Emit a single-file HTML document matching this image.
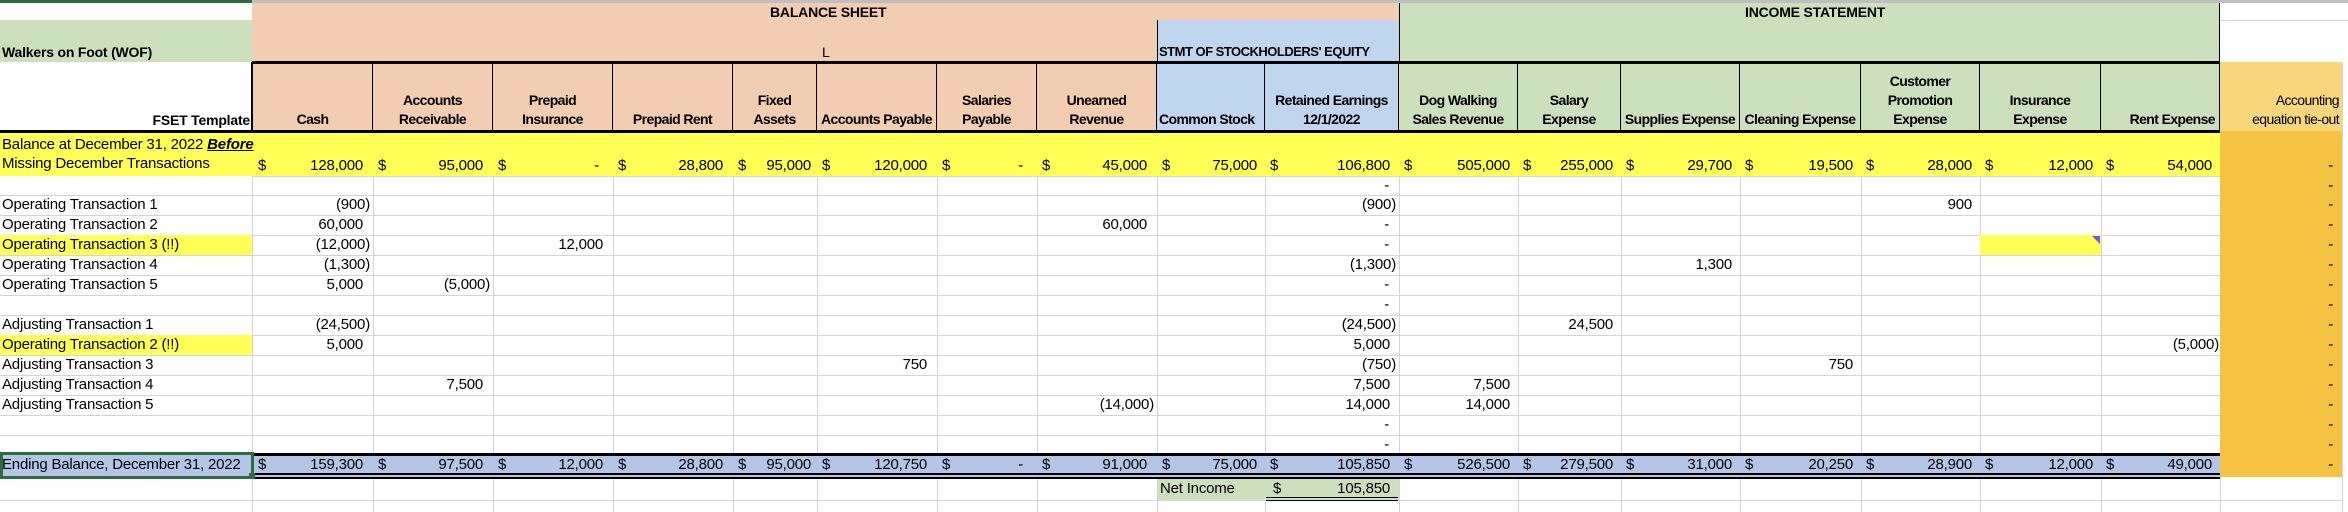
<!DOCTYPE html>
<html><head><meta charset="utf-8"><style>
*{margin:0;padding:0;box-sizing:border-box}
body{width:2348px;height:512px;position:relative;overflow:hidden;background:#fff;font-family:"Liberation Sans Narrow","Liberation Sans",sans-serif;font-size:15px;color:#000;letter-spacing:-0.2px}
div{position:absolute}
.h{height:1px;left:0;width:2348px;background:#d4d4d4}
.v{width:1px;top:176px;height:336px;background:#d4d4d4}
.t{white-space:nowrap;line-height:18px;height:18px}
.r{text-align:right}
.b{font-weight:bold;font-size:14px}
.hd{top:62px;height:69px;border-right:1.5px solid #000;font-weight:bold;font-size:14px;text-align:center;line-height:19px;display:flex;align-items:flex-end;justify-content:center;padding-bottom:2px;white-space:nowrap;letter-spacing:-0.6px}
</style></head><body>
<div style="left:0;top:0;width:2348px;height:3px;background:#bfbfbf"></div>
<div style="left:0;top:0;width:252px;height:3px;background:#2f6b3f"></div>
<div style="left:252px;top:3px;width:1147px;height:59px;background:#f2cdb1"></div>
<div style="left:1157px;top:20px;width:242px;height:42px;background:#c0d6ee;border-left:1.5px solid #000"></div>
<div style="left:1399px;top:3px;width:821px;height:128px;background:#cde0bd;border-left:1.5px solid #000;border-right:1.5px solid #000"></div>
<div style="left:0;top:20px;width:252px;height:42px;background:#cde0bd"></div>
<div style="left:2220px;top:20px;width:128px;height:1px;background:#d4d4d4"></div>
<div style="left:2220px;top:62px;width:122px;height:69px;background:#f8d77c"></div>
<div class="t b" style="left:770px;top:3px">BALANCE SHEET</div>
<div class="t" style="left:822px;top:43px;font-size:14px">L</div>
<div class="t b" style="left:1159px;top:43px;font-size:13px;letter-spacing:-0.5px">STMT OF STOCKHOLDERS' EQUITY</div>
<div class="t b" style="left:1745px;top:3px">INCOME STATEMENT</div>
<div class="t b" style="left:2px;top:43px">Walkers on Foot (WOF)</div>
<div class="hd" style="left:252px;width:121px;background:#f2cdb1;border-left:1.5px solid #000">Cash</div>
<div class="hd" style="left:373px;width:120px;background:#f2cdb1">Accounts<br>Receivable</div>
<div class="hd" style="left:493px;width:120px;background:#f2cdb1">Prepaid<br>Insurance</div>
<div class="hd" style="left:613px;width:120px;background:#f2cdb1">Prepaid Rent</div>
<div class="hd" style="left:733px;width:84px;background:#f2cdb1">Fixed<br>Assets</div>
<div class="hd" style="left:817px;width:120px;background:#f2cdb1">Accounts Payable</div>
<div class="hd" style="left:937px;width:100px;background:#f2cdb1">Salaries<br>Payable</div>
<div class="hd" style="left:1037px;width:120px;background:#f2cdb1">Unearned<br>Revenue</div>
<div class="hd" style="left:1157px;width:108px;background:#c0d6ee;justify-content:flex-start;padding-left:2px">Common Stock</div>
<div class="hd" style="left:1265px;width:134px;background:#c0d6ee">Retained Earnings<br>12/1/2022</div>
<div class="hd" style="left:1399px;width:119px;background:#cde0bd">Dog Walking<br>Sales Revenue</div>
<div class="hd" style="left:1518px;width:103px;background:#cde0bd">Salary<br>Expense</div>
<div class="hd" style="left:1621px;width:119px;background:#cde0bd">Supplies Expense</div>
<div class="hd" style="left:1740px;width:121px;background:#cde0bd">Cleaning Expense</div>
<div class="hd" style="left:1861px;width:119px;background:#cde0bd">Customer<br>Promotion<br>Expense</div>
<div class="hd" style="left:1980px;width:121px;background:#cde0bd">Insurance<br>Expense</div>
<div class="hd" style="left:2101px;width:119px;background:#cde0bd;justify-content:flex-end;padding-right:4px">Rent Expense</div>
<div class="hd" style="left:2220px;width:122px;background:#f8d77c;border:none;text-align:right;justify-content:flex-end;font-weight:normal;padding-right:3px">Accounting<br>equation tie-out</div>
<div class="t b r" style="left:0;top:111px;width:250px">FSET Template</div>
<div style="left:252px;top:61px;width:1968px;height:3px;background:#000"></div>
<div style="left:0;top:130px;width:2220px;height:3px;background:#000"></div>
<div style="left:251px;top:62px;width:2px;height:70px;background:#000"></div>
<div style="left:0;top:133px;width:2220px;height:43px;background:#ffff55"></div>
<div class="h" style="top:176px"></div><div class="h" style="top:195px"></div><div class="h" style="top:215px"></div><div class="h" style="top:235px"></div><div class="h" style="top:255px"></div><div class="h" style="top:275px"></div><div class="h" style="top:295px"></div><div class="h" style="top:315px"></div><div class="h" style="top:335px"></div><div class="h" style="top:355px"></div><div class="h" style="top:375px"></div><div class="h" style="top:395px"></div><div class="h" style="top:415px"></div><div class="h" style="top:435px"></div><div class="h" style="top:500px"></div>
<div class="v" style="left:252px"></div><div class="v" style="left:373px"></div><div class="v" style="left:493px"></div><div class="v" style="left:613px"></div><div class="v" style="left:733px"></div><div class="v" style="left:817px"></div><div class="v" style="left:937px"></div><div class="v" style="left:1037px"></div><div class="v" style="left:1157px"></div><div class="v" style="left:1265px"></div><div class="v" style="left:1399px"></div><div class="v" style="left:1518px"></div><div class="v" style="left:1621px"></div><div class="v" style="left:1740px"></div><div class="v" style="left:1861px"></div><div class="v" style="left:1980px"></div><div class="v" style="left:2101px"></div><div class="v" style="left:2220px"></div>
<div style="left:2220px;top:131px;width:122px;height:346px;background:#f5c242"></div>
<div style="left:2342px;top:62px;width:6px;height:450px;background:#fff;border-left:1px solid #d4d4d4"></div>
<div style="left:0;top:176px;width:252px;height:336px;background:#fff"></div>
<div class="h" style="top:195px;width:252px"></div><div class="h" style="top:215px;width:252px"></div><div class="h" style="top:235px;width:252px"></div><div class="h" style="top:255px;width:252px"></div><div class="h" style="top:275px;width:252px"></div><div class="h" style="top:295px;width:252px"></div><div class="h" style="top:315px;width:252px"></div><div class="h" style="top:335px;width:252px"></div><div class="h" style="top:355px;width:252px"></div><div class="h" style="top:375px;width:252px"></div><div class="h" style="top:395px;width:252px"></div><div class="h" style="top:415px;width:252px"></div><div class="h" style="top:435px;width:252px"></div><div class="h" style="top:500px;width:252px"></div>
<div style="left:0;top:235px;width:252px;height:20px;background:#ffff55"></div>
<div style="left:0;top:335px;width:252px;height:20px;background:#ffff55"></div>
<div style="left:1980px;top:235px;width:121px;height:20px;background:#ffff55"></div>
<div style="left:2092px;top:236px;width:8px;height:8px;background:#6a5fd6;clip-path:polygon(0 0,100% 0,100% 100%)"></div>
<div class="t" style="left:2px;top:136px">Balance at December 31, 2022 <b style="font-style:italic;text-decoration:underline">Before </b></div>
<div class="t" style="left:2px;top:155px">Missing December Transactions</div>
<div class="t" style="left:2px;top:196px">Operating Transaction 1</div>
<div class="t" style="left:2px;top:216px">Operating Transaction 2</div>
<div class="t" style="left:2px;top:236px">Operating Transaction 3 (!!)</div>
<div class="t" style="left:2px;top:256px">Operating Transaction 4</div>
<div class="t" style="left:2px;top:276px">Operating Transaction 5</div>
<div class="t" style="left:2px;top:316px">Adjusting Transaction 1</div>
<div class="t" style="left:2px;top:336px">Operating Transaction 2 (!!)</div>
<div class="t" style="left:2px;top:356px">Adjusting Transaction 3</div>
<div class="t" style="left:2px;top:376px">Adjusting Transaction 4</div>
<div class="t" style="left:2px;top:396px">Adjusting Transaction 5</div>
<div style="left:0;top:453px;width:2220px;height:24px;background:#b4c6e7"></div>
<div style="left:253px;top:453px;width:1967px;height:3px;background:#000"></div>
<div style="left:253px;top:473px;width:1967px;height:2px;background:#000"></div>
<div style="left:0;top:477px;width:2220px;height:2px;background:#000"></div>
<div style="left:0;top:452px;width:254px;height:27px;border:3px solid #2f6b3f"></div>
<div style="left:249px;top:473px;width:6px;height:6px;background:#2f6b3f"></div>
<div class="t" style="left:2px;top:456px">Ending Balance, December 31, 2022</div>
<div style="left:1157px;top:479px;width:242px;height:21px;background:#cde0bd"></div>
<div class="t" style="left:1160px;top:480px">Net Income</div>
<div class="t" style="left:1273px;top:480px">$</div>
<div class="t r" style="left:1265px;top:480px;width:125px">105,850</div>
<div style="left:1266px;top:497px;width:132px;height:4px;border-top:1.5px solid #000;border-bottom:1.5px solid #000"></div>
<div class="t" style="left:258px;top:157px">$</div><div class="t r" style="left:252px;top:157px;width:111px">128,000</div>
<div class="t" style="left:378px;top:157px">$</div><div class="t r" style="left:373px;top:157px;width:110px">95,000</div>
<div class="t" style="left:498px;top:157px">$</div><div class="t r" style="left:493px;top:157px;width:106px">-</div>
<div class="t" style="left:618px;top:157px">$</div><div class="t r" style="left:613px;top:157px;width:110px">28,800</div>
<div class="t" style="left:738px;top:157px">$</div><div class="t r" style="left:733px;top:157px;width:78px">95,000</div>
<div class="t" style="left:822px;top:157px">$</div><div class="t r" style="left:817px;top:157px;width:110px">120,000</div>
<div class="t" style="left:942px;top:157px">$</div><div class="t r" style="left:937px;top:157px;width:86px">-</div>
<div class="t" style="left:1042px;top:157px">$</div><div class="t r" style="left:1037px;top:157px;width:110px">45,000</div>
<div class="t" style="left:1162px;top:157px">$</div><div class="t r" style="left:1157px;top:157px;width:100px">75,000</div>
<div class="t" style="left:1270px;top:157px">$</div><div class="t r" style="left:1265px;top:157px;width:125px">106,800</div>
<div class="t" style="left:1404px;top:157px">$</div><div class="t r" style="left:1399px;top:157px;width:111px">505,000</div>
<div class="t" style="left:1523px;top:157px">$</div><div class="t r" style="left:1518px;top:157px;width:95px">255,000</div>
<div class="t" style="left:1626px;top:157px">$</div><div class="t r" style="left:1621px;top:157px;width:111px">29,700</div>
<div class="t" style="left:1745px;top:157px">$</div><div class="t r" style="left:1740px;top:157px;width:113px">19,500</div>
<div class="t" style="left:1866px;top:157px">$</div><div class="t r" style="left:1861px;top:157px;width:111px">28,000</div>
<div class="t" style="left:1985px;top:157px">$</div><div class="t r" style="left:1980px;top:157px;width:113px">12,000</div>
<div class="t" style="left:2106px;top:157px">$</div><div class="t r" style="left:2101px;top:157px;width:111px">54,000</div>
<div class="t" style="left:258px;top:456px">$</div><div class="t r" style="left:252px;top:456px;width:111px">159,300</div>
<div class="t" style="left:378px;top:456px">$</div><div class="t r" style="left:373px;top:456px;width:110px">97,500</div>
<div class="t" style="left:498px;top:456px">$</div><div class="t r" style="left:493px;top:456px;width:110px">12,000</div>
<div class="t" style="left:618px;top:456px">$</div><div class="t r" style="left:613px;top:456px;width:110px">28,800</div>
<div class="t" style="left:738px;top:456px">$</div><div class="t r" style="left:733px;top:456px;width:78px">95,000</div>
<div class="t" style="left:822px;top:456px">$</div><div class="t r" style="left:817px;top:456px;width:110px">120,750</div>
<div class="t" style="left:942px;top:456px">$</div><div class="t r" style="left:937px;top:456px;width:86px">-</div>
<div class="t" style="left:1042px;top:456px">$</div><div class="t r" style="left:1037px;top:456px;width:110px">91,000</div>
<div class="t" style="left:1162px;top:456px">$</div><div class="t r" style="left:1157px;top:456px;width:100px">75,000</div>
<div class="t" style="left:1270px;top:456px">$</div><div class="t r" style="left:1265px;top:456px;width:125px">105,850</div>
<div class="t" style="left:1404px;top:456px">$</div><div class="t r" style="left:1399px;top:456px;width:111px">526,500</div>
<div class="t" style="left:1523px;top:456px">$</div><div class="t r" style="left:1518px;top:456px;width:95px">279,500</div>
<div class="t" style="left:1626px;top:456px">$</div><div class="t r" style="left:1621px;top:456px;width:111px">31,000</div>
<div class="t" style="left:1745px;top:456px">$</div><div class="t r" style="left:1740px;top:456px;width:113px">20,250</div>
<div class="t" style="left:1866px;top:456px">$</div><div class="t r" style="left:1861px;top:456px;width:111px">28,900</div>
<div class="t" style="left:1985px;top:456px">$</div><div class="t r" style="left:1980px;top:456px;width:113px">12,000</div>
<div class="t" style="left:2106px;top:456px">$</div><div class="t r" style="left:2101px;top:456px;width:111px">49,000</div>
<div class="t r" style="left:1265px;top:177px;width:124px">-</div>
<div class="t r" style="left:252px;top:196px;width:118px">(900)</div>
<div class="t r" style="left:1265px;top:196px;width:131px">(900)</div>
<div class="t r" style="left:1861px;top:196px;width:111px">900</div>
<div class="t r" style="left:252px;top:216px;width:111px">60,000</div>
<div class="t r" style="left:1037px;top:216px;width:110px">60,000</div>
<div class="t r" style="left:1265px;top:216px;width:124px">-</div>
<div class="t r" style="left:252px;top:236px;width:118px">(12,000)</div>
<div class="t r" style="left:493px;top:236px;width:110px">12,000</div>
<div class="t r" style="left:1265px;top:236px;width:124px">-</div>
<div class="t r" style="left:252px;top:256px;width:118px">(1,300)</div>
<div class="t r" style="left:1265px;top:256px;width:131px">(1,300)</div>
<div class="t r" style="left:1621px;top:256px;width:111px">1,300</div>
<div class="t r" style="left:252px;top:276px;width:111px">5,000</div>
<div class="t r" style="left:373px;top:276px;width:117px">(5,000)</div>
<div class="t r" style="left:1265px;top:276px;width:124px">-</div>
<div class="t r" style="left:1265px;top:296px;width:124px">-</div>
<div class="t r" style="left:252px;top:316px;width:118px">(24,500)</div>
<div class="t r" style="left:1265px;top:316px;width:131px">(24,500)</div>
<div class="t r" style="left:1518px;top:316px;width:95px">24,500</div>
<div class="t r" style="left:252px;top:336px;width:111px">5,000</div>
<div class="t r" style="left:1265px;top:336px;width:125px">5,000</div>
<div class="t r" style="left:2101px;top:336px;width:118px">(5,000)</div>
<div class="t r" style="left:817px;top:356px;width:110px">750</div>
<div class="t r" style="left:1265px;top:356px;width:131px">(750)</div>
<div class="t r" style="left:1740px;top:356px;width:113px">750</div>
<div class="t r" style="left:373px;top:376px;width:110px">7,500</div>
<div class="t r" style="left:1265px;top:376px;width:125px">7,500</div>
<div class="t r" style="left:1399px;top:376px;width:111px">7,500</div>
<div class="t r" style="left:1037px;top:396px;width:117px">(14,000)</div>
<div class="t r" style="left:1265px;top:396px;width:125px">14,000</div>
<div class="t r" style="left:1399px;top:396px;width:111px">14,000</div>
<div class="t r" style="left:1265px;top:416px;width:124px">-</div>
<div class="t r" style="left:1265px;top:436px;width:124px">-</div>
<div class="t r" style="left:2220px;top:157px;width:113px">-</div>
<div class="t r" style="left:2220px;top:177px;width:113px">-</div>
<div class="t r" style="left:2220px;top:196px;width:113px">-</div>
<div class="t r" style="left:2220px;top:216px;width:113px">-</div>
<div class="t r" style="left:2220px;top:236px;width:113px">-</div>
<div class="t r" style="left:2220px;top:256px;width:113px">-</div>
<div class="t r" style="left:2220px;top:276px;width:113px">-</div>
<div class="t r" style="left:2220px;top:296px;width:113px">-</div>
<div class="t r" style="left:2220px;top:316px;width:113px">-</div>
<div class="t r" style="left:2220px;top:336px;width:113px">-</div>
<div class="t r" style="left:2220px;top:356px;width:113px">-</div>
<div class="t r" style="left:2220px;top:376px;width:113px">-</div>
<div class="t r" style="left:2220px;top:396px;width:113px">-</div>
<div class="t r" style="left:2220px;top:416px;width:113px">-</div>
<div class="t r" style="left:2220px;top:436px;width:113px">-</div>
<div class="t r" style="left:2220px;top:456px;width:113px">-</div>
</body></html>
